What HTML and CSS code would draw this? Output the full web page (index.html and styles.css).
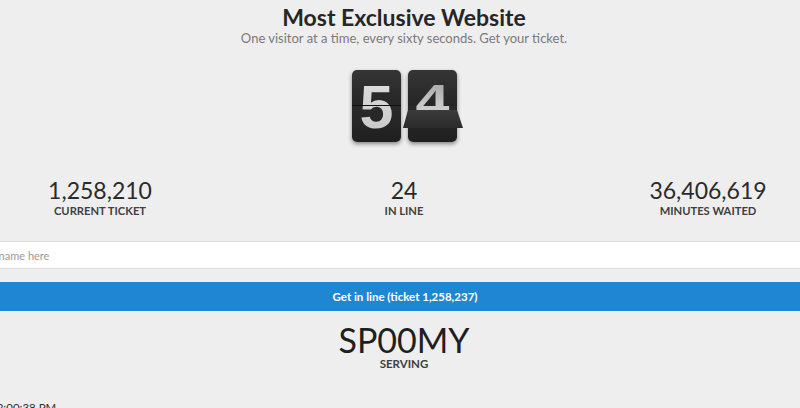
FILE: index.html
```html
<!DOCTYPE html>
<html lang="en">
<head>
<meta charset="utf-8">
<title>Most Exclusive Website</title>
<link rel="stylesheet" href="styles.css">
</head>
<body>
<div class="page">
  <header class="intro">
    <h1 class="title">Most Exclusive Website</h1>
    <p class="tagline">One visitor at a time, every sixty seconds. Get your ticket.</p>
  </header>

  <div class="clock">
    <div class="card"><span class="digit">5</span></div>
    <div class="card flipping"><span class="digit">4</span><div class="flap"></div></div>
  </div>

  <div class="stats">
    <div class="stat"><div class="stat-value">1,258,210</div><div class="stat-label">CURRENT TICKET</div></div>
    <div class="stat"><div class="stat-value">24</div><div class="stat-label">IN LINE</div></div>
    <div class="stat"><div class="stat-value">36,406,619</div><div class="stat-label">MINUTES WAITED</div></div>
  </div>

  <form class="join">
    <input class="name-input" type="text" placeholder="Your name here">
    <button class="join-button" type="button">Get in line (ticket 1,258,237)</button>
  </form>

  <div class="serving">
    <div class="serving-name">SP00MY</div>
    <div class="serving-label">SERVING</div>
  </div>

  <div class="timestamp">12:00:38 PM</div>
</div>
</body>
</html>
```

FILE: styles.css
```css
html, body {
  margin: 0;
  padding: 0;
}

body {
  background: #eeeeee;
  font-family: Lato, "Open Sans", sans-serif;
  color: #333;
  overflow: hidden;
}

.page {
  width: 912px;
  margin-left: -52px;
}

/* heading */
.intro {
  text-align: center;
}

.title {
  margin: 4px 0 0;
  font-size: 23px;
  line-height: 26px;
  font-weight: 700;
  color: #262626;
}

.tagline {
  margin: 0;
  font-size: 13px;
  line-height: 16px;
  color: #7a7a7a;
}

/* flip clock */
.clock {
  display: flex;
  justify-content: center;
  gap: 7px;
  margin-top: 24px;
  padding-left: 1px;
}

.card {
  position: relative;
  width: 49px;
  height: 72px;
  border-radius: 5px;
  background: linear-gradient(#353535, #262626 50%, #2b2b2b 50%, #1f1f1f);
  box-shadow: 0 2px 4px rgba(0, 0, 0, 0.45);
  text-align: center;
}

.card::after {
  content: "";
  position: absolute;
  left: 0;
  right: 0;
  top: 35px;
  height: 1px;
  background: #111;
}

.digit {
  display: block;
  font-family: "Liberation Sans", Arial, sans-serif;
  font-weight: 700;
  font-size: 61px;
  line-height: 74px;
  background: linear-gradient(#e2e2e2, #c4c4c4);
  -webkit-background-clip: text;
  background-clip: text;
  -webkit-text-fill-color: transparent;
}

/* the upper half of the next digit, tilted mid-flip */
.flipping .digit {
  transform: scaleY(0.78);
  transform-origin: 50% 14px;
  background: linear-gradient(#9a9a9a, #c8c8c8 55%, #dedede);
  -webkit-background-clip: text;
  background-clip: text;
}

.flipping::after {
  display: none;
}

.flap {
  position: absolute;
  left: -5px;
  right: -6px;
  top: 40px;
  height: 18px;
  background: linear-gradient(#3b3b3b, #2a2a2a);
  clip-path: polygon(5px 0, calc(100% - 6px) 0, 100% 100%, 0 100%);
  z-index: 1;
}

/* counters */
.stats {
  display: grid;
  grid-template-columns: repeat(3, 1fr);
  margin-top: 35px;
  text-align: center;
}

.stat-value {
  font-size: 23px;
  line-height: 26px;
  color: #2a2a2a;
}

.stat-label {
  margin-top: 1px;
  font-size: 11.2px;
  line-height: 13px;
  font-weight: 700;
  color: #404040;
}

/* ticket form */
.join {
  margin: 24px 0 0;
  display: flex;
  flex-direction: column;
  gap: 13px;
}

.name-input {
  box-sizing: border-box;
  height: 28px;
  margin: 0;
  padding: 0 0 0 25px;
  border: 1px solid #dcdcdc;
  background: #fff;
  font-family: Lato, sans-serif;
  font-size: 11px;
  color: #333;
}

.name-input::placeholder {
  color: #9a9a9a;
}

.join-button {
  height: 29px;
  margin: 0;
  padding: 0 0 0 2px;
  border: 0;
  background: #1f87d1;
  color: #fff;
  font-family: Lato, sans-serif;
  font-size: 11.5px;
  font-weight: 700;
}

/* now serving */
.serving {
  margin-top: 12px;
  text-align: center;
}

.serving-name {
  font-size: 34px;
  line-height: 34px;
  color: #1f1f1f;
}

.serving-label {
  font-size: 11.5px;
  line-height: 13px;
  font-weight: 700;
  color: #404040;
}

.timestamp {
  margin: 31px 0 0 42px;
  font-size: 11.5px;
  line-height: 13px;
  color: #333;
}
```
